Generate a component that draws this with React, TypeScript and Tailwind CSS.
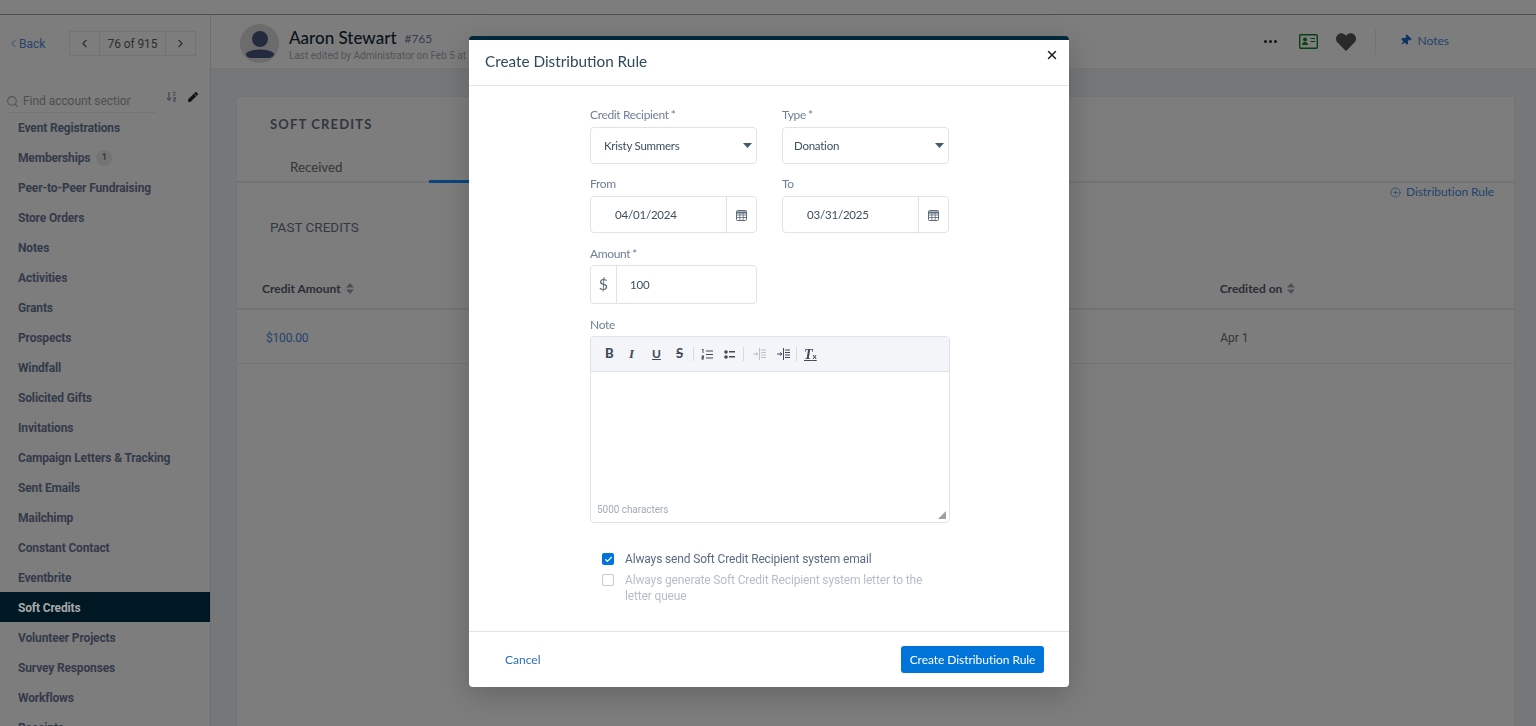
import React from "react";
import { ChevronLeft, ChevronRight, Search, X, Check, CirclePlus } from "lucide-react";
import { FaHeart, FaThumbtack, FaPen } from "react-icons/fa";

const sections = [
  "Event Registrations", "Memberships", "Peer-to-Peer Fundraising", "Store Orders", "Notes", "Activities", "Grants",
  "Prospects", "Windfall", "Solicited Gifts", "Invitations", "Campaign Letters & Tracking", "Sent Emails", "Mailchimp",
  "Constant Contact", "Eventbrite", "Soft Credits", "Volunteer Projects", "Survey Responses", "Workflows", "Receipts",
];

function Sort({ className = "" }: { className?: string }) {
  return (
    <svg width="8" height="11" viewBox="0 0 8 11" className={className}>
      <path d="M4 0 8 4.500H0zM4 11 0 6.500H8z" fill="#4c5053" />
    </svg>
  );
}

function Caret() {
  return (
    <svg width="9" height="5" viewBox="0 0 9 5">
      <path d="M0 0h9L4.500 5z" fill="#445a6e" />
    </svg>
  );
}

function Cal() {
  return (
    <svg width="11" height="12" viewBox="0 0 11 12" fill="none" stroke="#5c6b7a" strokeWidth="1">
      <rect x=".5" y="1.500" width="10" height="10" rx="1" />
      <path d="M.5 3.500h10" strokeWidth="2" />
      <path d="M.5 6h10M.5 8.500h10M3.800 4v7.500M7.200 4v7.500" strokeWidth=".8" />
    </svg>
  );
}

function Label({ children, req }: { children: React.ReactNode; req?: boolean }) {
  return (
    <div className="text-[12px] leading-[16px] tracking-[-0.35px] text-[#6f7f99] font-['Lato',sans-serif]">
      {children}
      {req && <span className="ml-[2px]">*</span>}
    </div>
  );
}

function SelectBox({ value, pad }: { value: string; pad: string }) {
  return (
    <div className={`mt-[4px] h-[37px] w-[167px] flex items-center justify-between border border-[#dde3ea] rounded-[4px] pr-[4px] ${pad}`}>
      <span className="text-[11.500px] tracking-[-0.25px] text-[#3d4f5f] font-['Lato',sans-serif]">{value}</span>
      <Caret />
    </div>
  );
}

function DateBox({ value }: { value: string }) {
  return (
    <div className="mt-[4px] h-[37px] w-[167px] flex border border-[#dde3ea] rounded-[4px]">
      <div className="w-[135px] flex items-center pl-[24px] text-[11.500px] tracking-[-0.2px] text-[#3d4f5f] font-['Lato',sans-serif]">{value}</div>
      <div className="flex-1 border-l border-[#dde3ea] flex items-center justify-center"><Cal /></div>
    </div>
  );
}

function ToolSep({ className = "" }: { className?: string }) {
  return <span className={`w-px h-[14px] bg-[#d5dae2] mx-[4px] ${className}`} />;
}

function Indent({ faded }: { faded?: boolean }) {
  const c = faded ? "#b9c0c9" : "#3f4a59";
  return (
    <svg width="13" height="12" viewBox="0 0 13 12" fill="none" stroke={c} strokeWidth="1">
      <path d="M6.500 0v12M8 2h5M8 4.500h5M8 7h5M8 9.500h5" />
      <path d="M0 6h5" />
      <path d="M3 4.500 5 6 3 7.500" />
    </svg>
  );
}

export default function App() {
  return (
    <div className="relative h-[726px] w-full overflow-hidden bg-[#767779] font-['Roboto',sans-serif]">
      <div className="h-[15px] bg-[#7d7d7d] border-b border-[#4f4f4f]" />
      <div className="flex h-[711px]">
        <aside className="w-[211px] shrink-0 bg-[#7d7d7d] border-r border-[#6e6e6e] overflow-hidden">
          <div className="h-[57px] flex items-center pl-[9px]">
            <a className="flex items-center text-[12px] text-[#23436c] w-[60px]">
              <ChevronLeft size={13} strokeWidth={1.500} className="-ml-[2px]" />
              <span className="-ml-[1px]">Back</span>
            </a>
            <div className="flex h-[25px] w-[127px] border border-[#737373] text-[12px] text-[#2e2e2e]">
              <span className="w-[30px] flex items-center justify-center border-r border-[#737373]"><ChevronLeft size={13} /></span>
              <span className="flex-1 flex items-center justify-center tracking-[-0.1px]">76 of 915</span>
              <span className="w-[30px] flex items-center justify-center border-l border-[#737373]"><ChevronRight size={13} /></span>
            </div>
          </div>
          <div className="mt-[16px] flex items-start pl-[6px] h-[25px]">
            <div className="w-[150px] h-[25px] pt-[2px] flex items-center border-b border-[#747474]">
              <Search size={13} className="text-[#555555]" />
              <span className="ml-[4px] h-[16px] leading-[16px] w-[108px] overflow-hidden whitespace-nowrap text-[12px] tracking-[-0.05px] text-[#4e4e4e]">Find account section</span>
            </div>
            <div className="ml-[10px] mt-[3px] flex items-center">
              <svg width="11" height="11" viewBox="0 0 11 11" fill="none" stroke="#333a4a">
                <path d="M3 1v8M1 7l2 2.500L5 7" />
                <path d="M7 1.500h2.500M7 4h2.500M7 7h3L7 10h3" strokeWidth=".9" />
              </svg>
              <FaPen size={10} className="ml-[11px] text-[#0e141b]" />
            </div>
          </div>
          <nav className="h-[640px] -mt-[1px] overflow-hidden">
            {sections.map((s) => (
              <div
                key={s}
                className={`h-[30px] pt-[1px] flex items-center pl-[18px] text-[12px] font-bold tracking-[-0.15px] ${
                  s === "Soft Credits" ? "bg-[#001824] text-[#a8a8a8]" : "text-[#333a4a]"
                }`}
              >
                {s}
                {s === "Memberships" && (
                  <span className="ml-[6px] w-[16px] h-[16px] rounded-full bg-[#747474] text-[#333a4a] text-[9px] flex items-center justify-center">1</span>
                )}
              </div>
            ))}
          </nav>
        </aside>

        <main className="flex-1 min-w-0">
          <header className="h-[54px] bg-[#7d7d7d] border-b border-[#737476] flex items-center pl-[29px]">
            <div className="w-[39px] h-[39px] mt-[3px] rounded-full bg-[#6c6c6c] overflow-hidden flex items-center justify-center">
              <svg width="30" height="30" viewBox="0 0 30 30">
                <circle cx="15" cy="11" r="8" fill="#252b3f" />
                <ellipse cx="15" cy="26.500" rx="14" ry="5" fill="#252b3f" />
              </svg>
            </div>
            <div className="ml-[10px] w-[180px] mt-[6px]">
              <div className="flex items-baseline whitespace-nowrap">
                <span className="text-[17px] leading-[20px] font-medium text-[#0a121a] font-['Lato',sans-serif]">Aaron Stewart</span>
                <span className="ml-[8px] text-[12px] tracking-[-0.1px] -translate-y-[1px] text-[#333d4d] font-['Lato',sans-serif]">#765</span>
              </div>
              <div className="text-[10px] leading-[13px] text-[#515458] whitespace-nowrap">Last edited by Administrator on Feb 5 at</div>
            </div>
            <div className="ml-auto flex items-center mr-[87px]">
              <span className="flex gap-[2px] mr-[1px]">
                <i className="w-[3px] h-[3px] rounded-full bg-[#141414]" />
                <i className="w-[3px] h-[3px] rounded-full bg-[#141414]" />
                <i className="w-[3px] h-[3px] rounded-full bg-[#141414]" />
              </span>
              <svg width="19" height="15" viewBox="0 0 19 15" className="ml-[21px]">
                <rect x=".7" y=".7" width="17.600" height="13.600" rx="1" fill="none" stroke="#094012" strokeWidth="1.400" />
                <circle cx="6" cy="5.500" r="2" fill="#094012" />
                <path d="M3 11c0-2 1.500-3 3-3s3 1 3 3z" fill="#094012" />
                <path d="M11.500 4.500H16M11.500 7.500H16" stroke="#094012" strokeWidth="1" />
              </svg>
              <FaHeart size={20} className="ml-[18px] text-[#2a2a2a]" />
              <span className="ml-[19px] w-px h-[25px] bg-[#737373]" />
              <FaThumbtack size={11} className="ml-[24px] -mt-[2px] text-[#0c3266] rotate-45" />
              <span className="ml-[7px] -mt-[2px] text-[12px] text-[#23436c] font-['Lato',sans-serif]">Notes</span>
            </div>
          </header>

          <section className="ml-[25px] mr-[21px] mt-[27px] h-[700px] bg-[#7d7d7d] border border-[#747474]">
            <div className="h-[86px] border-b-2 border-[#737476] relative pl-[33px]">
              <h2 className="pt-[19px] text-[13px] leading-[16px] font-bold tracking-[1.150px] text-[#31353f] font-['Lato',sans-serif]">SOFT CREDITS</h2>
              <div className="mt-[26px] ml-[20px] text-[13.300px] leading-[18px] text-[#353535] font-['Lato',sans-serif]">Received</div>
              <span className="absolute left-[192px] bottom-[-2px] h-[3px] w-[40px] bg-[#0c4480]" />
            </div>
            <div className="relative h-[82px]">
              <div className="absolute right-[20px] top-[0px] flex items-center text-[12px] tracking-[-0.05px] text-[#23436c] font-['Lato',sans-serif]">
                <CirclePlus size={11} strokeWidth={1.500} />
                <span className="ml-[5px]">Distribution Rule</span>
              </div>
              <div className="pl-[33px] pt-[35px] text-[13.500px] leading-[18px] text-[#343840]">PAST CREDITS</div>
            </div>
            <div className="h-[45px] pt-[4px] border-b-2 border-[#737476] flex items-center text-[12px] font-bold text-[#2a2e36] font-['Lato',sans-serif] pl-[25px]">
              <span>Credit Amount</span>
              <Sort className="ml-[5px]" />
              <span className="ml-[866px]">Credited on</span>
              <Sort className="ml-[5px]" />
            </div>
            <div className="h-[54px] border-b border-[#737476] flex items-center text-[12px] pl-[29px] pt-[2px]">
              <span className="text-[#23436c] tracking-[-0.2px]">$100.00</span>
              <span className="ml-[912px] text-[#353535]">Apr 1</span>
            </div>
          </section>
        </main>
      </div>

      <div className="fixed inset-0 flex justify-center pt-[36px] pointer-events-none">
        <div className="w-[600px] h-[651px] translate-x-[1px] bg-white rounded-[4px] border-t-[4px] border-[#00283c] shadow-[0_8px_30px_rgba(0,0,0,0.2)] flex flex-col overflow-hidden">
          <div className="h-[46px] shrink-0 border-b border-[#e2e4e6] flex items-center justify-between pl-[16px] pr-[10px]">
            <span className="text-[15.300px] -mt-[3px] text-[#2f4a5a] font-['Lato',sans-serif]">Create Distribution Rule</span>
            <X size={14} strokeWidth={2.500} className="text-[#222] -mt-[16px]" />
          </div>

          <div className="flex-1 pl-[121px] pt-[21px]">
            <div className="flex gap-[25px]">
              <div><Label req>Credit Recipient</Label><SelectBox value="Kristy Summers" pad="pl-[13px]" /></div>
              <div><Label req>Type</Label><SelectBox value="Donation" pad="pl-[11px]" /></div>
            </div>
            <div className="flex gap-[25px] mt-[12px]">
              <div><Label>From</Label><DateBox value="04/01/2024" /></div>
              <div><Label>To</Label><DateBox value="03/31/2025" /></div>
            </div>
            <div className="mt-[13px]">
              <Label req>Amount</Label>
              <div className="mt-[3px] h-[39px] w-[167px] flex border border-[#dde3ea] rounded-[4px]">
                <div className="w-[26px] border-r border-[#dde3ea] flex items-center justify-center pb-[2px] text-[16px] text-[#5c6b7a] font-['Lato',sans-serif]">$</div>
                <div className="flex-1 flex items-center pl-[13px] text-[11.500px] tracking-[-0.2px] text-[#3d4f5f] font-['Lato',sans-serif]">100</div>
              </div>
            </div>
            <div className="mt-[13px] w-[360px]">
              <Label>Note</Label>
              <div className="mt-[3px] h-[187px] border border-[#dde3ea] rounded-[4px] flex flex-col relative">
                <div className="h-[35px] shrink-0 bg-[#f4f5f9] border-b border-[#dde3ea] flex items-center pl-[14px] text-[#3f4a59] rounded-t-[4px]">
                  <b className="w-[24px] text-[13px] font-['Lato',sans-serif] font-black">B</b>
                  <i className="w-[23px] text-[13px] font-bold font-['Liberation_Serif',serif]">I</i>
                  <span className="w-[24px] text-[12px] font-bold underline font-['Lato',sans-serif]">U</span>
                  <span className="w-[13px] text-[13px] font-bold line-through font-['Lato',sans-serif]">S</span>
                  <ToolSep />
                  <svg width="12" height="11" viewBox="0 0 12 11" fill="#3f4a59" className="ml-[3px]">
                    <path d="M5 1.500h7v1H5zM5 5h7v1H5zM5 8.500h7v1H5z" />
                    <path d="M1 0h1.500v4H1.500V1H1zM.5 6.500h2.500v2l-1.500 1H3v1H.5v-2l1.500-1h-1.500z" />
                  </svg>
                  <svg width="11" height="9" viewBox="0 0 11 9" fill="#3f4a59" className="ml-[11px]">
                    <circle cx="2" cy="2" r="1.800" /><circle cx="2" cy="7" r="1.800" />
                    <path d="M5 1h6v1.500H5zM5 6h6v1.500H5z" />
                  </svg>
                  <ToolSep className="ml-[8px]" />
                  <span className="ml-[5px]"><Indent faded /></span>
                  <span className="ml-[11px]"><Indent /></span>
                  <ToolSep className="ml-[6px]" />
                  <span className="ml-[3px] relative text-[14px] font-bold italic underline font-['Liberation_Serif',serif]">
                    T<span className="text-[8px] not-italic font-['Lato',sans-serif]">x</span>
                  </span>
                </div>
                <div className="flex-1" />
                <div className="pl-[6px] pb-[5px] text-[10px] leading-[14px] tracking-[-0.05px] text-[#a4acb9]">5000 characters</div>
                <svg width="8" height="8" viewBox="0 0 8 8" className="absolute right-[3px] bottom-[3px]">
                  <path d="M8 0v8H0z" fill="#9aa0a6" />
                </svg>
              </div>
            </div>
            <div className="mt-[28px] pl-[12px] w-[345px] text-[12px] leading-[16px] tracking-[-0.15px]">
              <div className="flex items-start">
                <span className="w-[12px] h-[12px] mt-[2px] rounded-[2px] bg-[#0074d9] flex items-center justify-center shrink-0">
                  <Check size={9} strokeWidth={3} className="text-white" />
                </span>
                <span className="ml-[11px] text-[#5c6b85]">Always send Soft Credit Recipient system email</span>
              </div>
              <div className="flex items-start mt-[5px]">
                <span className="w-[12px] h-[12px] mt-[2px] rounded-[2px] border border-[#c3c9d4] shrink-0" />
                <span className="ml-[11px] text-[#b5bdcb]">Always generate Soft Credit Recipient system letter to the letter queue</span>
              </div>
            </div>
          </div>

          <div className="h-[56px] shrink-0 border-t border-[#e2e4e6] flex items-center justify-between pl-[36px] pr-[25px]">
            <span className="text-[12px] text-[#2a6fb8] font-['Lato',sans-serif]">Cancel</span>
            <span className="h-[27px] w-[143px] rounded-[3px] bg-[#0074d9] text-white text-[12px] tracking-[-0.05px] flex items-center justify-center font-['Lato',sans-serif]">Create Distribution Rule</span>
          </div>
        </div>
      </div>
    </div>
  );
}
